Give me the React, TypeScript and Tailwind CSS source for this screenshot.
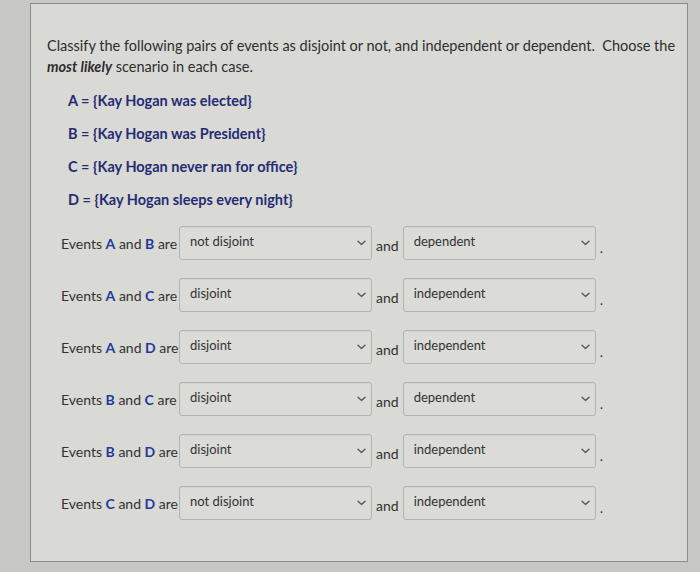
import React from "react";

const font = { fontFamily: "Lato, 'Open Sans', sans-serif" };

type Row = { a: string; b: string; first: string; second: string };

const rows: Row[] = [
  { a: "A", b: "B", first: "not disjoint", second: "dependent" },
  { a: "A", b: "C", first: "disjoint", second: "independent" },
  { a: "A", b: "D", first: "disjoint", second: "independent" },
  { a: "B", b: "C", first: "disjoint", second: "dependent" },
  { a: "B", b: "D", first: "disjoint", second: "independent" },
  { a: "C", b: "D", first: "not disjoint", second: "independent" },
];

function Chevron() {
  return (
    <svg width="9" height="6" viewBox="0 0 9 6" className="shrink-0">
      <path d="M1 1.2 L4.5 4.6 L8 1.2" fill="none" stroke="#5a5a5a" strokeWidth="1.4" strokeLinecap="round" strokeLinejoin="round" />
    </svg>
  );
}

function Select({ value }: { value: string }) {
  return (
    <div className="flex h-[34px] w-[193px] items-center justify-between rounded-[3px] border border-[#b3b3b0] bg-[#dbdbd7] pl-[10px] pr-[5px] shadow-[inset_0_1px_1px_rgba(0,0,0,0.04)]">
      <span className="-mt-[3px] text-[13px] text-[#333333]">{value}</span>
      <Chevron />
    </div>
  );
}

export default function App() {
  return (
    <div className="h-[572px] w-[700px] overflow-hidden bg-[#c7c8c5] pl-[30px] pr-[12px] pt-[3px]" style={font}>
      <div className="h-[559px] border border-[#8c8c8a] bg-[#d9d9d5] pl-[16px] pt-[31px]">
        <p className="text-[14.5px] leading-[21px] text-[#2e2e2e] whitespace-nowrap">
          Classify the following pairs of events as disjoint or not, and independent or dependent.&nbsp; Choose the
          <br />
          <span className="font-bold italic">most likely</span> scenario in each case.
        </p>
        <div className="ml-[21px] mt-[13px] flex flex-col gap-[12px] text-[14.5px] font-bold leading-[21px] text-[#262c74]">
          <div>A = {"{"}Kay Hogan was elected{"}"}</div>
          <div>B = {"{"}Kay Hogan was President{"}"}</div>
          <div>C = {"{"}Kay Hogan never ran for office{"}"}</div>
          <div>D = {"{"}Kay Hogan sleeps every night{"}"}</div>
        </div>
        <div className="mt-[16px] flex flex-col gap-[18px] pl-[14px]">
          {rows.map((r, i) => (
            <div key={i} className="flex items-center text-[14px] text-[#333333]">
              <span className="w-[118px] whitespace-nowrap">
                Events <b className="text-[#1f3a9c]">{r.a}</b> and <b className="text-[#1f3a9c]">{r.b}</b> are
              </span>
              <Select value={r.first} />
              <span className="mx-[4px] mt-[5px]">and</span>
              <Select value={r.second} />
              <span className="ml-[4px] mt-[8px]">.</span>
            </div>
          ))}
        </div>
      </div>
    </div>
  );
}
